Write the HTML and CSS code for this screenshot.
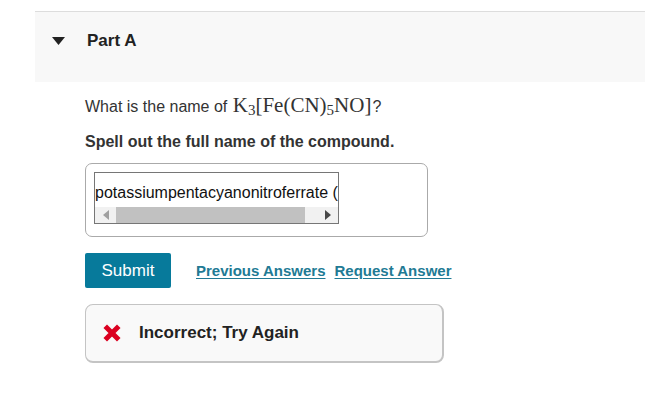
FILE: index.html
```html
<!DOCTYPE html>
<html lang="en">
<head>
    <meta charset="UTF-8">
    <meta name="viewport" content="width=device-width, initial-scale=1.0">
    <title>Part A</title>
    <link rel="stylesheet" href="styles.css">
</head>
<body>
    <main class="part">
        <!-- Part header -->
        <header class="part-header">
            <button class="part-toggle" type="button" aria-label="Collapse Part A">
                <svg width="13" height="8" viewBox="0 0 13 8" aria-hidden="true">
                    <path d="M0 0h13L6.500 8z" fill="#222"/>
                </svg>
            </button>
            <h2>Part A</h2>
        </header>

        <!-- Question and answer form -->
        <form class="question">
            <p class="prompt">What is the name of <span class="formula">K<sub>3</sub>[Fe(CN)<sub>5</sub>NO]</span>?</p>
            <label class="instruction" for="answer">Spell out the full name of the compound.</label>

            <div class="answer-box">
                <div class="answer-field">
                    <input id="answer" type="text" value="potassiumpentacyanonitroferrate (">
                    <div class="scrollbar">
                        <button type="button" class="scroll-arrow" aria-label="Scroll left">
                            <svg width="6" height="10" viewBox="0 0 6 10" aria-hidden="true">
                                <path d="M6 0v10L0 5z" fill="#a0a0a0"/>
                            </svg>
                        </button>
                        <div class="scroll-track">
                            <div class="scroll-thumb"></div>
                        </div>
                        <button type="button" class="scroll-arrow" aria-label="Scroll right">
                            <svg width="6" height="10" viewBox="0 0 6 10" aria-hidden="true">
                                <path d="M0 0v10l6-5z" fill="#484848"/>
                            </svg>
                        </button>
                    </div>
                </div>
            </div>

            <div class="actions">
                <button class="submit" type="submit">Submit</button>
                <nav class="links">
                    <a href="#previous">Previous Answers</a>
                    <a href="#request">Request Answer</a>
                </nav>
            </div>

            <div class="feedback" role="status">
                <svg width="18" height="18" viewBox="0 0 18 18" aria-hidden="true">
                    <path d="M4 4l10 10M14 4L4 14" stroke="#db0020" stroke-width="5" stroke-linecap="square" stroke-linejoin="round" fill="none"/>
                </svg>
                <strong>Incorrect; Try Again</strong>
            </div>
        </form>
    </main>
</body>
</html>
```

FILE: styles.css
```css
* {
    box-sizing: border-box;
}

body {
    margin: 0;
    background-color: #fff;
    color: #333;
    font-family: "Liberation Sans", Arial, sans-serif;
    font-size: 16px;
}

button {
    border: none;
    background: none;
    padding: 0;
    font-family: inherit;
    cursor: pointer;
}

svg {
    display: block;
}

/* Part header */
.part {
    padding: 11px 0 0 35px;
}

.part-header {
    display: flex;
    align-items: flex-start;
    gap: 22px;
    min-height: 71px;
    padding: 19px 17px;
    background-color: #f8f8f8;
    border-top: 1px solid #ddd;
}

.part-toggle {
    display: flex;
    align-items: center;
    height: 20px;
}

.part-header h2 {
    margin: 0;
    color: #222;
    font-size: 17px;
    line-height: 20px;
}

/* Question */
.question {
    padding: 11px 16px 0 50px;
}

.prompt {
    margin: 0;
    line-height: 24px;
}

.formula {
    padding: 0 1px;
    font-family: "Liberation Serif", "Times New Roman", serif;
    font-size: 21px;
}

.formula sub {
    font-size: 15px;
    line-height: 0;
    vertical-align: -3px;
}

.instruction {
    display: block;
    margin-top: 11px;
    font-weight: bold;
    line-height: 24px;
}

/* Answer box */
.answer-box {
    max-width: 343px;
    margin-top: 9px;
    padding: 8px;
    border: 1px solid #aaa;
    border-radius: 7px;
}

.answer-field {
    max-width: 245px;
    margin-bottom: 4px;
    border: 1px solid #767676;
}

.answer-field input {
    display: block;
    width: 100%;
    height: 34px;
    padding: 5px 0 0;
    border: none;
    outline: none;
    background: none;
    color: #111;
    font-family: inherit;
    font-size: 16px;
}

.scrollbar {
    display: flex;
    height: 16px;
    background-color: #f1f1f1;
}

.scroll-arrow {
    display: flex;
    align-items: center;
    justify-content: center;
    width: 21px;
}

.scroll-track {
    flex: 1;
}

.scroll-thumb {
    width: 94%;
    height: 100%;
    background-color: #c1c1c1;
}

/* Buttons and links */
.actions {
    display: flex;
    align-items: center;
    gap: 25px;
    margin-top: 16px;
}

.submit {
    min-width: 86px;
    height: 35px;
    padding: 0 16px;
    border-radius: 2px;
    background-color: #077a9b;
    color: #fff;
    font-size: 17px;
}

.links {
    display: flex;
    gap: 9px;
}

.links a {
    color: #217a94;
    font-size: 15px;
    font-weight: bold;
    text-underline-offset: 2px;
}

/* Feedback */
.feedback {
    display: flex;
    align-items: center;
    gap: 18px;
    max-width: 359px;
    height: 59px;
    margin-top: 16px;
    padding: 0 17px;
    border: 1px solid #c4c4c4;
    border-right-width: 2px;
    border-bottom-width: 2px;
    border-radius: 8px;
    background-color: #f9f9f9;
    color: #222;
    font-size: 17px;
}
```
